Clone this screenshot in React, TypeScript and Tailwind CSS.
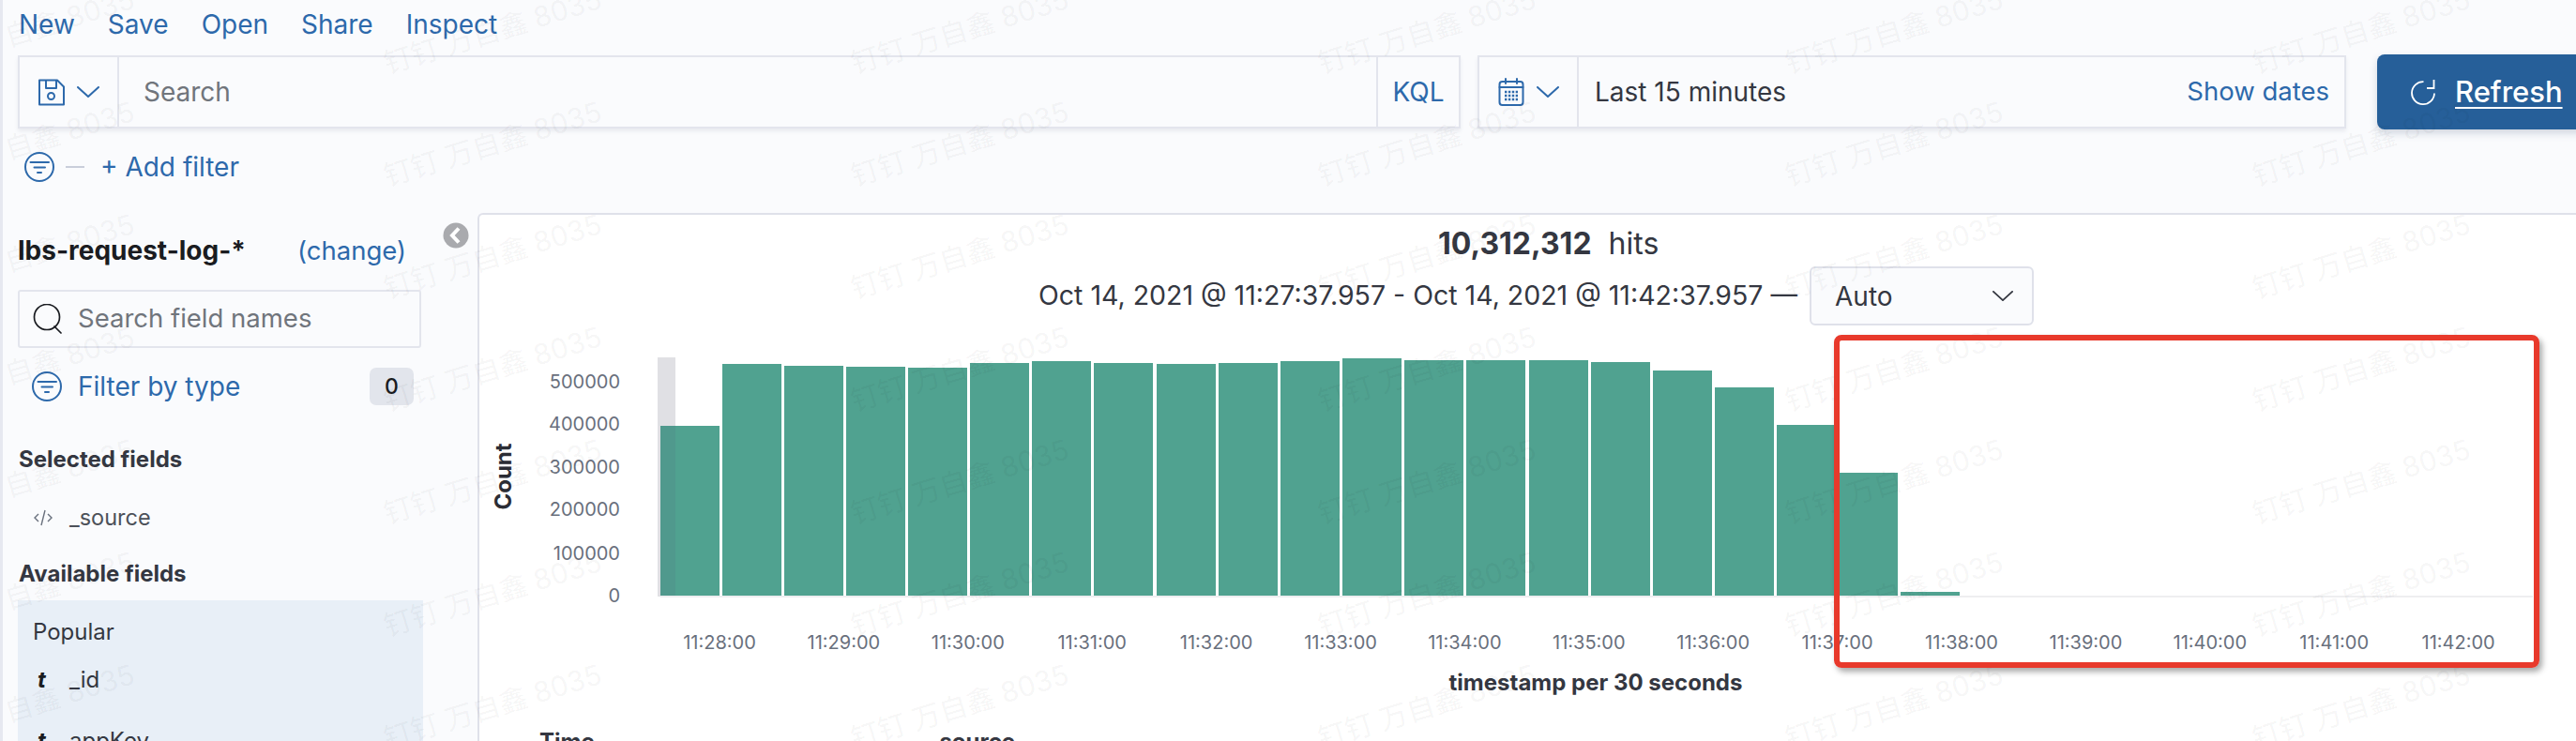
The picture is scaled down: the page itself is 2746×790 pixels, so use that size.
import React from "react";

const BLUE = "#2d69ab";
const STARTS = [704,770,836,902,968,1034,1100,1166,1233,1299,1365,1431,1497,1563,1630,1696,1762,1828,1894,1960,2026];
const TOPS = [454,388,390,391,392,387,385,387,388,387,385,382,384,384,384,386,395,413,453,504,631];
const YT: [string, number][] = [["500000",407],["400000",452],["300000",498],["200000",543],["100000",590],["0",635]];
const XT = ["11:28:00","11:29:00","11:30:00","11:31:00","11:32:00","11:33:00","11:34:00","11:35:00","11:36:00","11:37:00","11:38:00","11:39:00","11:40:00","11:41:00","11:42:00"];

function Chevron({ w = 24, h = 12, color = BLUE }: { w?: number; h?: number; color?: string }) {
  return (
    <svg width={w} height={h} viewBox="0 0 24 12" fill="none" stroke={color} strokeWidth="2" strokeLinecap="round" strokeLinejoin="round" preserveAspectRatio="none">
      <path d="M1 1 L12 11 L23 1" />
    </svg>
  );
}

function FilterIcon() {
  return (
    <svg width="32" height="32" viewBox="0 0 32 32" fill="none" stroke={BLUE} strokeWidth="2" strokeLinecap="round">
      <circle cx="16" cy="16" r="15" />
      <path d="M6.5 11 H26 M10.5 16.5 H22 M14 22 H18" />
    </svg>
  );
}

function TypeRow({ name, className }: { name: string; className: string }) {
  return (
    <div className={`flex h-[40px] items-center text-[24px] text-[#343741] ${className}`}>
      <span className="w-[39px] pl-[5px] font-bold italic text-[#1a1c21]">t</span>
      <span>{name}</span>
    </div>
  );
}

export default function App() {
  return (
    <div className="relative h-[790px] w-[2746px] overflow-hidden border-l-[3px] border-[#e6e8f0] bg-[#fafbfd] font-['Inter','Noto_Sans_CJK_SC',sans-serif]">
      <nav className="flex h-[59px] items-center gap-[35px] pb-[7px] pl-[17px] text-[28px] text-[#2d69ab]">
        <span>New</span>
        <span>Save</span>
        <span>Open</span>
        <span>Share</span>
        <span>Inspect</span>
      </nav>

      <div className="flex h-[78px] items-stretch pl-[16px]">
        <div className="flex w-[1538px] shrink-0 items-stretch border-2 border-[#e3e5ed] shadow-[0_3px_4px_rgba(90,100,130,0.1)]">
          <div className="flex w-[106px] items-center gap-[13px] border-r-2 border-[#e3e5ed] pl-[19px]">
            <svg width="29" height="29" viewBox="0 0 29 29" fill="none" stroke={BLUE} strokeWidth="2" strokeLinejoin="round">
              <path d="M2 1.5 H21 L28 8.5 V27.5 H2 Z" />
              <path d="M9 1.5 V10 H20 V1.5" />
              <circle cx="14.5" cy="18.5" r="3.5" />
            </svg>
            <Chevron />
          </div>
          <div className="flex flex-1 items-center pl-[26px] text-[28px] text-[#70757c]">Search</div>
          <div className="flex w-[88px] items-center justify-center border-l-2 border-[#e3e5ed] text-[28px] text-[#2d69ab]">KQL</div>
        </div>

        <div className="ml-[18px] flex w-[926px] shrink-0 items-stretch border-2 border-[#e3e5ed] shadow-[0_3px_4px_rgba(90,100,130,0.1)]">
          <div className="flex w-[106px] items-center gap-[13px] border-r-2 border-[#e3e5ed] pl-[20px]">
            <svg width="28" height="30" viewBox="0 0 28 30" fill="none" stroke={BLUE} strokeWidth="2" strokeLinecap="round">
              <rect x="1.5" y="4" width="25" height="25" rx="3" />
              <path d="M1.5 10 H26.5 M8 1 V6 M20 1 V6" />
              <path d="M7 15 H21 M7 19 H21 M7 23 H21" strokeWidth="2.4" strokeDasharray="2.4 1.5" strokeLinecap="butt" />
            </svg>
            <Chevron />
          </div>
          <div className="flex flex-1 items-center justify-between pl-[17px] pr-[16px] text-[28px]">
            <span className="text-[#343741]">Last 15 minutes</span>
            <span className="text-[27.5px] text-[#2d69ab]">Show dates</span>
          </div>
        </div>

        <div className="ml-[33px] -mt-px flex h-[80px] w-[300px] shrink-0 items-center rounded-[8px] bg-[#265f99] pl-[36px] text-[31px] font-medium text-white shadow-[0_4px_8px_rgba(60,80,120,0.22)]">
          <svg width="28" height="30" viewBox="0 0 28 30" fill="none" stroke="white" strokeWidth="1.8" className="mr-[19px]">
            <path d="M13.5 4.2 A12 12 0 1 0 25 16.5" />
            <path d="M24.5 2 V11 H17" />
          </svg>
          <span className="underline decoration-2 underline-offset-[5px]">Refresh</span>
        </div>
      </div>

      <div className="flex h-[90px] items-start pl-[23px] pt-[25px]">
        <FilterIcon />
        <span className="ml-[12px] mt-[15px] h-[2px] w-[20px] bg-[#c9ceda]" />
        <span className="ml-[17px] text-[28px] leading-[32px] text-[#2d69ab]">+ Add filter</span>
      </div>

      <div className="flex h-[563px] items-stretch">
        <aside className="w-[506px] shrink-0 pl-[16px]">
          <div className="flex h-[82px] items-start pt-[10px]">
            <span className="mt-[10px] w-[298px] text-[28px] font-bold leading-[40px] text-[#1a1c21]">lbs-request-log-*</span>
            <span className="mt-[10px] w-[155px] text-[27.5px] leading-[40px] text-[#2d69ab]">(change)</span>
            <svg width="28" height="28" viewBox="0 0 28 28">
              <circle cx="14" cy="14" r="13.5" fill="#a9aaae" />
              <path d="M17 6.5 L10 14 L17 21.5" fill="none" stroke="white" strokeWidth="4" />
            </svg>
          </div>

          <div className="flex h-[62px] w-[430px] items-center rounded-[3px] border-2 border-[#e3e5ed] pl-[14px] text-[27.5px] text-[#70757c]">
            <svg width="32" height="32" viewBox="0 0 32 32" fill="none" stroke="#1a1c21" strokeWidth="1.7" strokeLinecap="round" className="mr-[16px] shrink-0">
              <circle cx="15" cy="14" r="13.5" />
              <path d="M23 24 L30 31" />
            </svg>
            <span className="whitespace-nowrap">Search field names</span>
          </div>

          <div className="mt-[21px] flex h-[40px] w-[422px] items-center justify-between pl-[15px]">
            <div className="flex items-center gap-[17px] text-[28px] text-[#2d69ab]">
              <FilterIcon />
              <span>Filter by type</span>
            </div>
            <span className="flex h-[40px] w-[47px] items-center justify-center rounded-[7px] bg-[#e2e5ec] text-[23px] font-medium text-[#1a1c21]">0</span>
          </div>

          <div className="mt-[38px] pl-[1px] text-[24px] font-bold leading-[40px] text-[#343741]">Selected fields</div>
          <div className="mt-[22px] flex h-[40px] items-center pl-[17px] text-[23.5px] text-[#4c5159]">
            <svg width="20" height="18" viewBox="0 0 20 18" fill="none" stroke="#69707d" strokeWidth="1.4" className="mr-[18px]">
              <path d="M5 5 L1 9 L5 13 M15 5 L19 9 L15 13 M12 1 L8 17" />
            </svg>
            <span>_source</span>
          </div>
          <div className="mt-[20px] pl-[1px] text-[24px] font-bold leading-[40px] text-[#343741]">Available fields</div>

          <div className="mt-[8px] h-[200px] w-[432px] bg-[#e8eff7] pl-[16px] pt-[14px]">
            <div className="text-[24px] leading-[40px] text-[#343741]">Popular</div>
            <TypeRow name="_id" className="mt-[11px]" />
            <TypeRow name="appKey" className="mt-[25px]" />
          </div>
        </aside>

        <main className="flex-1 overflow-hidden rounded-tl-[6px] border-l-2 border-t-2 border-[#dfe1ea] bg-white">
          <div className="flex h-[55px] items-center gap-[18px] pl-[1022px] pt-[6px] text-[#343741]">
            <span className="text-[32px] font-bold">10,312,312</span>
            <span className="text-[32px]">hits</span>
          </div>
          <div className="flex h-[63px] items-center pl-[596px] text-[#343741]">
            <span className="w-[822px] whitespace-nowrap text-[28.5px]">Oct 14, 2021 @ 11:27:37.957 - Oct 14, 2021 @ 11:42:37.957 —</span>
            <div className="flex h-[63px] w-[239px] items-center justify-between rounded-[6px] border-2 border-[#dfe1ea] bg-[#fafbfd] pl-[25px] pr-[20px] text-[28px]">
              <span>Auto</span>
              <Chevron w={22} h={11} color="#343741" />
            </div>
          </div>

          <svg width="2235" height="396" viewBox="511 347 2235 396" className="block font-['Inter',sans-serif]">
            <rect x="701" y="381" width="19" height="255" fill="#e0e0e4" />
            {STARTS.map((x, i) => (
              <rect key={x} x={x} y={TOPS[i]} width="63" height={636 - TOPS[i]} fill="#50a290" />
            ))}
            <rect x="704" y="454" width="16" height="182" fill="#50998d" />
            <line x1="704" y1="636" x2="2700" y2="636" stroke="#eeeef0" strokeWidth="2" />
            {YT.map(([t, y]) => (
              <text key={t} x="661" y={y + 7} textAnchor="end" fontSize="20" fill="#69707d">{t}</text>
            ))}
            {XT.map((t, i) => (
              <text key={t} x={767 + i * 132.4} y="692" textAnchor="middle" fontSize="20" fill="#69707d">{t}</text>
            ))}
            <text x="545" y="508" transform="rotate(-90 545 508)" textAnchor="middle" fontSize="24" fontWeight="700" fill="#2b2d35">Count</text>
            <text x="1701" y="736" textAnchor="middle" fontSize="24" fontWeight="700" fill="#343741">timestamp per 30 seconds</text>
          </svg>

          <div className="flex h-[70px] pt-[30px] text-[24px] font-bold text-[#343741]">
            <span className="ml-[64px] w-[415px]">Time</span>
            <span>_source</span>
          </div>
        </main>
      </div>

      <div className="pointer-events-none absolute -left-[225px] -top-[27px] grid w-max grid-cols-[repeat(7,498px)] grid-rows-[repeat(8,120px)]">
        {Array.from({ length: 56 }, (_, i) => (
          <div key={i} className="flex items-center justify-center whitespace-nowrap text-[30px] text-black/[0.05] -rotate-[17deg]">
            钉钉 万自鑫 8035
          </div>
        ))}
      </div>

      <div className="absolute left-[1952px] top-[357px] h-[355px] w-[752px] rounded-[8px] border-[6px] border-[#e8392b] shadow-[3px_4px_6px_rgba(0,0,0,0.35)]" />
    </div>
  );
}
